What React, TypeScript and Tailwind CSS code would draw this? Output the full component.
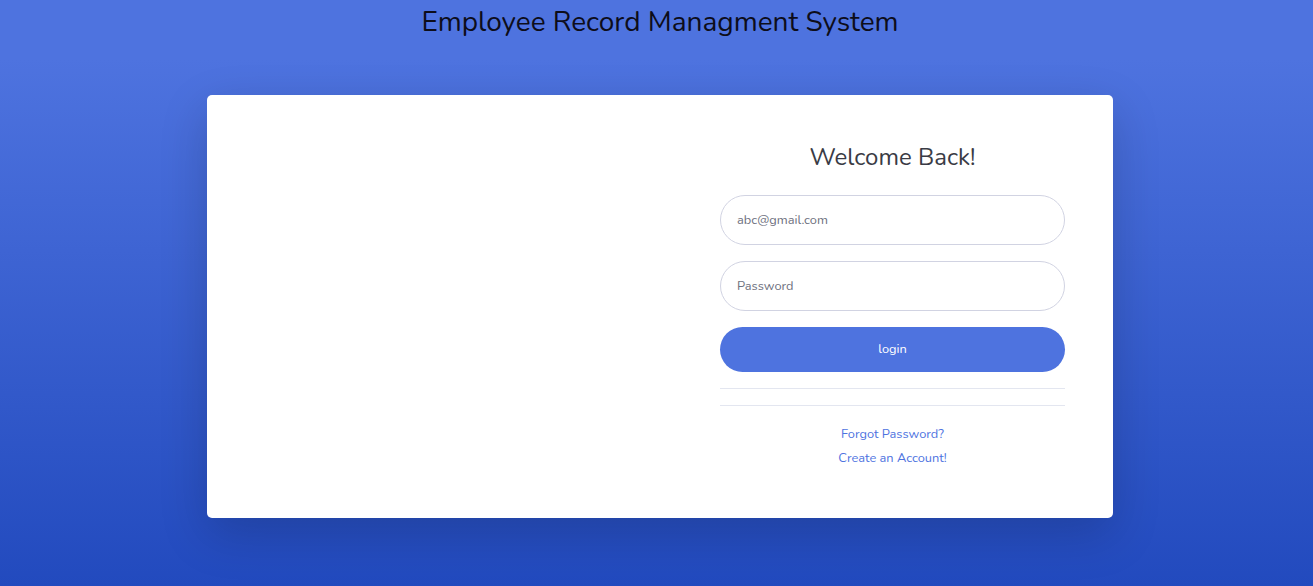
export default function App() {
  return (
    <div
      className="min-h-screen w-full bg-[linear-gradient(180deg,#4e73df_10%,#224abe_100%)] pl-[7px]"
      style={{ fontFamily: 'Nunito, Lato, "Noto Sans", sans-serif' }}
    >
      <h3 className="pt-[6px] text-center text-[28px] leading-[1.2] font-normal text-[#0d0d1a]">
        Employee Record Managment System
      </h3>
      <div className="flex justify-center pt-[55px] pb-[68px]">
        <div className="grid w-[906px] grid-cols-2 overflow-hidden rounded-[5px] bg-white shadow-[0_1rem_3rem_rgba(0,0,0,0.175)]">
          <div />
          <div className="pt-[48px] pb-[48px] pl-[60px] pr-[48px]">
            <h4 className="mb-[24px] text-center text-[24px] leading-[1.2] font-normal text-[#3a3b45]">
              Welcome Back!
            </h4>
            <form className="flex flex-col" onSubmit={(e) => e.preventDefault()}>
              <input
                type="email"
                placeholder="abc@gmail.com"
                className="mb-[16px] h-[50px] w-full rounded-full border border-[#d1d3e2] bg-white px-[16px] text-[12.8px] text-[#6e707e] outline-none placeholder:text-[#6e707e]"
              />
              <input
                type="password"
                placeholder="Password"
                className="mb-[16px] h-[50px] w-full rounded-full border border-[#d1d3e2] bg-white px-[16px] text-[12.8px] text-[#6e707e] outline-none placeholder:text-[#6e707e]"
              />
              <button
                type="submit"
                className="h-[45px] w-full rounded-full bg-[#4e73df] text-[12.8px] text-white"
              >
                login
              </button>
              <hr className="my-[16px] border-t border-[#e3e6f0]" />
            </form>
            <hr className="mb-[16px] border-t border-[#e3e6f0]" />
            <div className="text-center text-[12.8px] leading-[24px]">
              <a href="#" className="text-[#4e73df]">
                Forgot Password?
              </a>
            </div>
            <div className="text-center text-[12.8px] leading-[24px]">
              <a href="#" className="text-[#4e73df]">
                Create an Account!
              </a>
            </div>
          </div>
        </div>
      </div>
    </div>
  );
}
